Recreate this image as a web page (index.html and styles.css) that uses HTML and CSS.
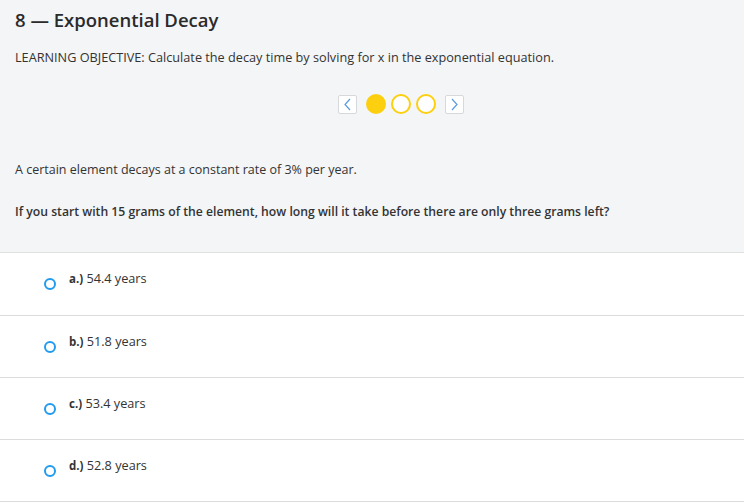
FILE: index.html
```html
<!DOCTYPE html>
<html>
<head>
<meta charset="utf-8">
<link rel="stylesheet" href="styles.css">
</head>
<body>
<div class="header">
  <h1 class="title">8 — Exponential Decay</h1>
  <p class="objective"><span class="obj-label">LEARNING OBJECTIVE:</span> Calculate the decay time by solving for x in the exponential equation.</p>
  <div class="nav">
    <button class="nav-btn" aria-label="Previous">
      <svg width="9" height="13" viewBox="0 0 9 13"><path d="M7 1 L2 6.5 L7 12" fill="none" stroke="#5a9be0" stroke-width="1.2"/></svg>
    </button>
    <div class="dots">
      <span class="dot filled"></span>
      <span class="dot"></span>
      <span class="dot"></span>
    </div>
    <button class="nav-btn" aria-label="Next">
      <svg width="9" height="13" viewBox="0 0 9 13"><path d="M2 1 L7 6.5 L2 12" fill="none" stroke="#5a9be0" stroke-width="1.2"/></svg>
    </button>
  </div>
  <p class="para">A certain element decays at a constant rate of 3% per year.</p>
  <p class="question">If you start with 15 grams of the element, how long will it take before there are only three grams left?</p>
</div>
<div class="options">
  <div class="option"><span class="radio"></span><span class="label"><b>a.)</b> 54.4 years</span></div>
  <div class="option"><span class="radio"></span><span class="label"><b>b.)</b> 51.8 years</span></div>
  <div class="option"><span class="radio"></span><span class="label"><b>c.)</b> 53.4 years</span></div>
  <div class="option"><span class="radio"></span><span class="label"><b>d.)</b> 52.8 years</span></div>
</div>
</body>
</html>
```
FILE: styles.css
```css
html, body {
  margin: 0;
  padding: 0;
  background: #fff;
}
body {
  font-family: "Open Sans", Lato, Arial, sans-serif;
  color: #333;
}
.header {
  background: #f4f5f7;
  border-bottom: 1px solid #dde0dd;
  padding: 10px 15px 32px;
  height: 210px;
}
.title {
  margin: 0;
  font-size: 18.5px;
  line-height: 20px;
  font-weight: 600;
  color: #2b2b2b;
}
.objective {
  margin: 19px 0 0;
  font-size: 12.7px;
  line-height: 16px;
}
.obj-label {
  font-weight: 500;
}
.nav {
  margin-top: 29px;
  padding-left: 323px;
  display: flex;
  align-items: center;
  height: 20px;
}
.nav-btn {
  width: 19px;
  height: 19px;
  padding: 0;
  margin: 0;
  border: 1px solid #d6d8db;
  border-radius: 2px;
  background: #fff;
  display: flex;
  align-items: center;
  justify-content: center;
}
.dots {
  display: flex;
  gap: 5px;
  margin: 0 9px;
}
.dot {
  width: 20px;
  height: 20px;
  box-sizing: border-box;
  border-radius: 50%;
  border: 2px solid #fccf0f;
  background: #fff;
}
.dot.filled {
  background: #fccf0f;
}
.para {
  margin: 48px 0 0;
  font-size: 12.5px;
  line-height: 16px;
}
.question {
  margin: 26px 0 0;
  font-size: 12.2px;
  line-height: 16px;
  font-weight: 600;
}
.option {
  height: 61px;
  border-bottom: 1px solid #dcdcdc;
  display: flex;
  align-items: flex-start;
  padding-left: 44px;
}
.option:first-child {
  height: 62px;
}
.radio {
  width: 12px;
  height: 12px;
  box-sizing: border-box;
  border: 2px solid #219bef;
  border-radius: 50%;
  margin-top: 25px;
}
.label {
  margin-left: 13px;
  margin-top: 17px;
  font-size: 12.7px;
  line-height: 16px;
}
.label b {
  font-size: 11.5px;
  font-weight: 700;
}
```
